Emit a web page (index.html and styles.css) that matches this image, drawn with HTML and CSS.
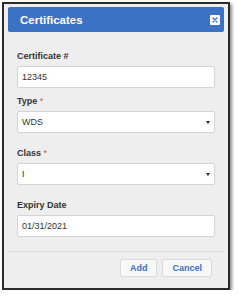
FILE: index.html
```html
<!DOCTYPE html>
<html lang="en">
<head>
    <meta charset="UTF-8">
    <title>Certificates</title>
    <link rel="stylesheet" href="styles.css">
</head>
<body>
    <div class="dialog">
        <div class="dialog-header">
            <span class="dialog-title">Certificates</span>
            <span class="close-btn">
                <svg width="10" height="10" viewBox="0 0 10 10">
                    <path d="M3 3 L7 7 M7 3 L3 7" stroke="#3b72c3" stroke-width="1.4" stroke-linecap="round"/>
                </svg>
            </span>
        </div>
        <div class="dialog-body">
            <div class="field">
                <label class="field-label">Certificate #</label>
                <div class="control">12345</div>
            </div>
            <div class="field required">
                <label class="field-label">Type <span class="req">*</span></label>
                <div class="control select">WDS</div>
            </div>
            <div class="field required">
                <label class="field-label">Class <span class="req">*</span></label>
                <div class="control select">I</div>
            </div>
            <div class="field">
                <label class="field-label">Expiry Date</label>
                <div class="control">01/31/2021</div>
            </div>
        </div>
        <div class="dialog-footer">
            <button class="btn">Add</button>
            <button class="btn">Cancel</button>
        </div>
    </div>
</body>
</html>
```

FILE: styles.css
```css
/* Page */
body {
    margin: 0;
    background-color: #fff;
    font-family: 'Liberation Sans', Arial, sans-serif;
    color: #333;
}

/* Dialog frame */
.dialog {
    box-sizing: border-box;
    width: 228px;
    margin: 2px 0 0 2px;
    padding: 3px 4px;
    background-color: #eeeeee;
    border: 2px solid #2b2b2b;
    box-shadow: 2px 2px 3px rgba(0, 0, 0, 0.45);
}

/* Header bar */
.dialog-header {
    display: flex;
    align-items: center;
    justify-content: space-between;
    height: 25px;
    padding: 0 4px 0 12px;
    background-color: #3b72c3;
    border-radius: 2px;
}
.dialog-title {
    color: #fff;
    font-size: 11.5px;
    font-weight: bold;
}
.close-btn {
    display: flex;
    width: 10px;
    height: 10px;
    background-color: #fff;
    border-radius: 1px;
}

/* Form body */
.dialog-body {
    padding: 18px 9px 14px;
}
.field {
    margin-bottom: 7px;
}
.field.required {
    margin-bottom: 14px;
}
.field:last-child {
    margin-bottom: 0;
}
.field-label {
    display: block;
    height: 12px;
    line-height: 12px;
    margin-bottom: 4px;
    font-size: 9px;
    font-weight: bold;
    color: #333;
}
.req {
    color: #d9534f;
    font-weight: normal;
}
.control {
    position: relative;
    box-sizing: border-box;
    height: 22px;
    line-height: 20px;
    padding: 0 4px;
    font-size: 9px;
    color: #333;
    background-color: #fff;
    border: 1px solid #d4d4d4;
    border-radius: 2px;
}
.control.select::after {
    content: "";
    position: absolute;
    right: 4px;
    top: 9px;
    border-left: 2.5px solid transparent;
    border-right: 2.5px solid transparent;
    border-top: 3px solid #222;
}

/* Footer with buttons */
.dialog-footer {
    display: flex;
    justify-content: flex-end;
    gap: 5px;
    padding: 7px 12px 8px 0;
    border-top: 1px solid #dcdcdc;
}
.btn {
    height: 18px;
    padding: 0 9px;
    font-family: inherit;
    font-size: 9px;
    font-weight: bold;
    color: #3b72c3;
    background-color: #f8f8f8;
    border: 1px solid #dadada;
    border-radius: 2px;
}
```
